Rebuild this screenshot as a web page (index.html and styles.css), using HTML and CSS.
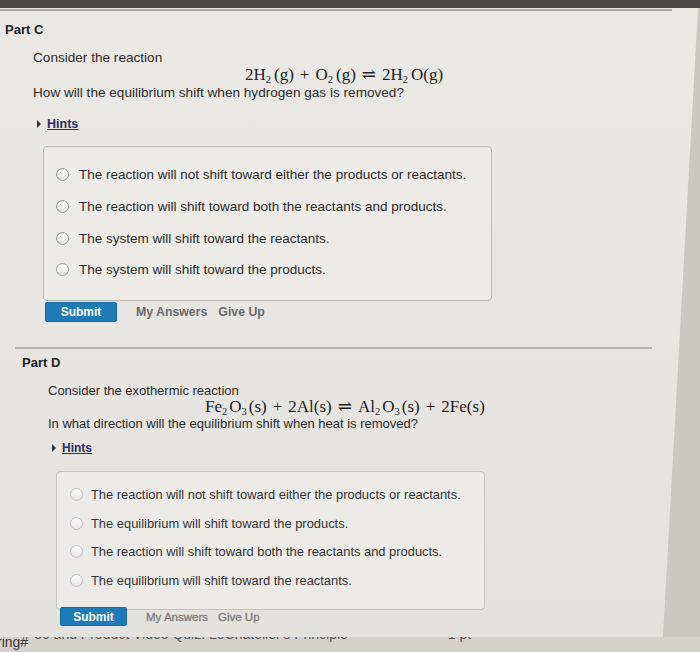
FILE: index.html
```html
<!DOCTYPE html>
<html lang="en">
<head>
    <meta charset="UTF-8">
    <meta name="viewport" content="width=device-width, initial-scale=1.0">
    <title>Part C / Part D</title>
    <link rel="stylesheet" href="styles.css">
</head>
<body>
    <div class="topbar"></div>

    <div class="panel">
        <div class="top-rule"></div>

        <!-- Part C -->
        <section class="part part-c">
            <h2>Part C</h2>
            <div class="prompt">
                <p>Consider the reaction</p>
                <p class="eq">2H<sub>2</sub>(g)<span class="op">+</span>O<sub>2</sub>(g)<span class="op">&#8652;</span>2H<sub>2</sub>O(g)</p>
                <p>How will the equilibrium shift when hydrogen gas is removed?</p>
                <div class="hints"><span class="caret"></span><a href="#">Hints</a></div>

                <div class="choices">
                    <label class="choice"><span class="radio"></span>The reaction will not shift toward either the products or reactants.</label>
                    <label class="choice"><span class="radio"></span>The reaction will shift toward both the reactants and products.</label>
                    <label class="choice"><span class="radio"></span>The system will shift toward the reactants.</label>
                    <label class="choice"><span class="radio"></span>The system will shift toward the products.</label>
                </div>

                <div class="actions">
                    <button type="button" class="submit">Submit</button>
                    <a href="#" class="answers">My Answers</a>
                    <a href="#">Give Up</a>
                </div>
            </div>
        </section>

        <div class="divider"></div>

        <!-- Part D -->
        <section class="part part-d">
            <h2>Part D</h2>
            <div class="prompt">
                <p>Consider the exothermic reaction</p>
                <p class="eq">Fe<sub>2</sub>O<sub>3</sub>(s)<span class="op">+</span>2Al(s)<span class="op">&#8652;</span>Al<sub>2</sub>O<sub>3</sub>(s)<span class="op">+</span>2Fe(s)</p>
                <p>In what direction will the equilibrium shift when heat is removed?</p>
                <div class="hints"><span class="caret"></span><a href="#">Hints</a></div>

                <div class="choices">
                    <label class="choice"><span class="radio"></span>The reaction will not shift toward either the products or reactants.</label>
                    <label class="choice"><span class="radio"></span>The equilibrium will shift toward the products.</label>
                    <label class="choice"><span class="radio"></span>The reaction will shift toward both the reactants and products.</label>
                    <label class="choice"><span class="radio"></span>The equilibrium will shift toward the reactants.</label>
                </div>

                <div class="actions">
                    <button type="button" class="submit">Submit</button>
                    <a href="#" class="answers">My Answers</a>
                    <a href="#">Give Up</a>
                </div>
            </div>
        </section>
    </div>

    <!-- next item in the list, half hidden under the panel -->
    <div class="footer">
        <div class="footer-line">
            <span class="tag">ring#</span>
            <span class="title">50 and Product Video Quiz: LeChatelier's Principle</span>
            <span class="pts">1 pt</span>
        </div>
    </div>
</body>
</html>
```

FILE: styles.css
```css
/* General Styling */
body {
    margin: 0;
    font-family: "Liberation Sans", Arial, sans-serif;
    color: #2a2a2a;
    background-color: #cbc8c4;
    height: 652px;
    overflow: hidden;
}

p {
    margin: 0;
}

.topbar {
    height: 8px;
    background-color: #4b4a49;
}

.panel {
    height: 629px;
    background: linear-gradient(#ebe9e5, #e4e2de);
    border-bottom-right-radius: 8px;
    clip-path: polygon(0 0, 698px 0, 663px 100%, 0 100%);
    overflow: hidden;
}

.top-rule {
    height: 2px;
    width: 672px;
    margin-top: 1px;
    background-color: #a9a8a6;
}

/* Sections */
.part h2 {
    margin: 0;
    font-size: 13px;
    line-height: 16px;
    font-weight: bold;
    color: #222;
}

.part-c {
    padding-left: 5px;
}

.part-c h2 {
    margin-top: 11px;
}

.part-c .prompt {
    margin-left: 28px;
    margin-top: 11px;
    font-size: 13.6px;
}

.prompt p {
    line-height: 17px;
}

.eq {
    font-family: "Liberation Serif", "DejaVu Serif", serif;
    color: #1e1e1e;
}

.eq sub {
    font-size: 10.5px;
    vertical-align: -3px;
    line-height: 0;
    margin-right: 3px;
}

.op {
    margin: 0 6px;
}

.part-c .eq {
    margin-left: 212px;
    font-size: 17px;
}

.prompt .eq {
    line-height: 18px;
}

.part-c .eq + p {
    line-height: 18px;
}

/* Hints toggle */
.hints {
    display: flex;
    align-items: center;
    font-size: 12.5px;
    font-weight: bold;
    line-height: 16px;
}

.hints a {
    color: #2a2d66;
    text-decoration: underline;
}

.caret {
    width: 0;
    height: 0;
    border-top: 4px solid transparent;
    border-bottom: 4px solid transparent;
    border-left: 4px solid #333;
    margin-right: 6px;
}

.part-c .hints {
    margin-top: 14px;
    margin-left: 4px;
}

/* Answer options */
.choices {
    border: 1px solid #b9b8b5;
    border-radius: 4px;
    background-color: #ecebe8;
    display: flex;
    flex-direction: column;
}

.choice {
    display: flex;
    align-items: center;
    color: #2b2b2b;
}

.radio {
    width: 11px;
    height: 11px;
    border: 1px solid #9d9c9a;
    border-radius: 50%;
    background: linear-gradient(#ffffff, #e3e3e3);
    flex-shrink: 0;
}

.part-c .choices {
    margin-top: 14px;
    margin-left: 10px;
    width: 447px;
    padding: 12px 0 14px;
    font-size: 13.5px;
}

.part-c .choice {
    height: 31.7px;
    padding-left: 12px;
}

.part-c .radio {
    margin-right: 10px;
}

/* Submit row */
.actions {
    display: flex;
    align-items: center;
    font-size: 12px;
    font-weight: bold;
}

.actions a {
    color: #6a6a6a;
    text-decoration: none;
}

.submit {
    font-family: inherit;
    font-size: 12px;
    font-weight: bold;
    color: #fff;
    background-color: #1f7bb6;
    border: 1px solid #1a6a9e;
    border-radius: 2px;
    padding: 0;
}

.answers {
    margin-right: 11px;
}

.part-c .actions {
    margin-top: 1px;
    margin-left: 12px;
    font-size: 12.3px;
}

.part-c .submit {
    width: 72px;
    height: 20px;
    margin-right: 19px;
}

.divider {
    height: 2px;
    width: 637px;
    margin: 25px 0 0 15px;
    background-color: #b4b3b0;
}

.part-d {
    padding-left: 22px;
}

.part-d h2 {
    margin-top: 6px;
}

.part-d .prompt {
    margin-left: 26px;
    margin-top: 12px;
    font-size: 13px;
}

.part-d .prompt p {
    line-height: 16.5px;
}

.part-d .eq {
    margin-left: 157px;
    font-size: 17px;
    line-height: 17px;
}

.part-d .eq sub {
    margin-right: 2px;
}

.part-d .hints {
    margin-top: 8px;
    margin-left: 4px;
    font-size: 12px;
}

.part-d .choices {
    margin-top: 15px;
    margin-left: 8px;
    width: 427px;
    padding: 8px 0 15px;
    font-size: 12.9px;
    border-color: #c4c3c0;
}

.part-d .choice {
    height: 28.5px;
    padding-left: 13px;
    color: #333;
}

.part-d .radio {
    border-color: #c2c1bf;
    margin-right: 8px;
}

.part-d .actions {
    margin-left: 12px;
    font-size: 11.5px;
    margin-top: -3px;
}

.part-d .actions a {
    color: #7a7a7a;
    font-weight: normal;
    -webkit-text-stroke: 0.3px #7a7a7a;
}

.part-d .submit {
    width: 67px;
    height: 19px;
    margin-right: 19px;
}

.part-d .answers {
    margin-right: 10px;
}

/* Bottom strip */
.footer {
    height: 15px;
    overflow: hidden;
    background-color: #d4d1cd;
}

.footer-line {
    display: flex;
    align-items: baseline;
    white-space: nowrap;
    font-size: 14px;
    color: #3a3a3a;
    margin-top: -3px;
}

.tag {
    margin-left: -3px;
}

.title {
    margin-left: 6px;
    position: relative;
    top: -8px;
    color: #55575c;
}

.pts {
    margin-left: 100px;
    position: relative;
    top: -8px;
    color: #55575c;
}
```
